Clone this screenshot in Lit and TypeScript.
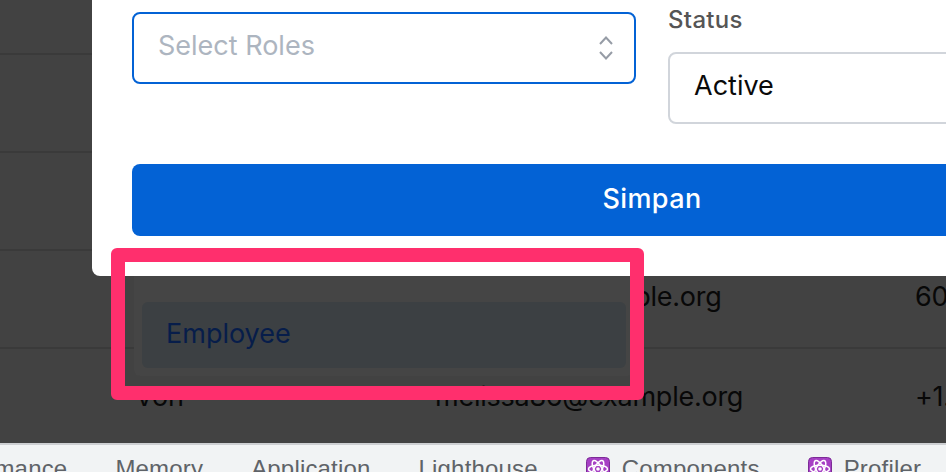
import { LitElement, html, css, svg } from "lit";
import { customElement } from "lit/decorators.js";

const atom = svg`<svg class="atom" viewBox="0 0 24 24" width="24" height="24">
  <rect x="0.5" y="0.5" width="23" height="23" rx="4" fill="#a640c4" stroke="#7c2b96"/>
  <g fill="none" stroke="#fff" stroke-width="1.5">
    <ellipse cx="12" cy="12" rx="9.5" ry="3.8"/>
    <ellipse cx="12" cy="12" rx="9.5" ry="3.8" transform="rotate(60 12 12)"/>
    <ellipse cx="12" cy="12" rx="9.5" ry="3.8" transform="rotate(120 12 12)"/>
  </g>
  <circle cx="12" cy="12" r="1.8" fill="#fff"/>
</svg>`;

@customElement("app-root")
export class AppRoot extends LitElement {
  static styles = css`
    :host {
      display: flex;
      flex-direction: column;
      width: 946px;
      height: 472px;
      overflow: hidden;
      font-family: "Inter", sans-serif;
    }
    .stage {
      position: relative;
      height: 443px;
      flex: none;
      background: #424242;
      overflow: hidden;
    }
    .table {
      display: grid;
      grid-template-rows: 55px 98px 98px 98px 94px;
    }
    .row {
      display: grid;
      grid-template-columns: 300px 480px 1fr;
      padding-left: 135px;
      align-items: center;
      border-bottom: 2px solid #3a3a3a;
      box-sizing: border-box;
      font-size: 27px;
      letter-spacing: -0.25px;
      color: #080808;
      white-space: nowrap;
      overflow: hidden;
    }
    .row:last-child { border-bottom: 0; }
    .row.r3 { padding-bottom: 6px; }
    .dropdown {
      position: absolute;
      left: 134px;
      top: 200px;
      width: 500px;
      height: 176px;
      box-sizing: border-box;
      padding: 8px;
      display: flex;
      flex-direction: column;
      justify-content: flex-end;
      background: #454545;
      border-radius: 6px;
    }
    .item {
      height: 66px;
      display: flex;
      align-items: center;
      padding: 0 0 4px 24px;
      box-sizing: border-box;
      border-radius: 6px;
      background: #3c4043;
      color: #071d4a;
      font-size: 27px;
    }
    .modal {
      position: absolute;
      left: 92px;
      top: -20px;
      width: 1120px;
      box-sizing: border-box;
      padding: 32px 40px 40px;
      background: #fff;
      border-radius: 8px;
      display: flex;
      flex-direction: column;
      gap: 40px;
    }
    .fields {
      display: flex;
      align-items: flex-start;
      gap: 32px;
    }
    .select {
      width: 504px;
      height: 72px;
      flex: none;
      box-sizing: border-box;
      border: 2px solid #0362d5;
      border-radius: 8px;
      padding: 0 20px 6px 24px;
      display: flex;
      align-items: center;
      justify-content: space-between;
      color: #adb5c0;
      font-size: 27px;
    }
    .chev { margin-top: 6px; }
    .label {
      height: 40px;
      color: #555;
      font-size: 24px;
      font-weight: 500;
      letter-spacing: 0.3px;
      line-height: 16px;
    }
    .input {
      width: 504px;
      height: 72px;
      box-sizing: border-box;
      border: 2px solid #d1d5db;
      border-radius: 8px;
      padding: 0 24px 6px;
      display: flex;
      align-items: center;
      color: #0a0a0a;
      font-size: 27px;
    }
    .save {
      height: 72px;
      background: #0362d5;
      color: #fff;
      font-size: 27px;
      font-weight: 500;
      letter-spacing: 0.4px;
      border-radius: 8px;
      display: flex;
      align-items: center;
      justify-content: center;
      padding-bottom: 4px;
      box-sizing: border-box;
    }
    .mark {
      position: absolute;
      left: 111px;
      top: 248px;
      width: 533px;
      height: 152px;
      box-sizing: border-box;
      border: 14px solid #ff2f6d;
      border-radius: 6px;
    }
    .tabs {
      flex: none;
      height: 29px;
      box-sizing: border-box;
      border-top: 2px solid #cdcfd2;
      background: #f1f3f4;
      display: flex;
      gap: 48px;
      margin-left: -72px;
      padding-top: 10px;
      font-family: "Liberation Sans", Arial, sans-serif;
      font-size: 24px;
      letter-spacing: 0.18px;
      line-height: 28px;
      color: #5f6368;
      white-space: nowrap;
      overflow: hidden;
    }
    .tab { display: flex; gap: 12px; }
    .atom { margin-top: 2px; flex: none; }
  `;

  render() {
    return html`
      <div class="stage">
        <div class="table">
          <div class="row"></div>
          <div class="row"></div>
          <div class="row"></div>
          <div class="row r3"><span></span><span>emilia86@example.org</span><span>60 812 3344</span></div>
          <div class="row r4"><span>Von</span><span>melissa86@example.org</span><span>+1.555.0142</span></div>
        </div>
        <div class="dropdown"><div class="item">Employee</div></div>
        <div class="modal">
          <div class="fields">
            <div class="select">
              <span>Select Roles</span>
              <svg class="chev" width="16" height="26" viewBox="0 0 16 26" fill="none" stroke="#969ca6" stroke-width="2">
                <path d="M2 9 8 2.5 14 9M2 17 8 23.5 14 17"/>
              </svg>
            </div>
            <div>
              <div class="label">Status</div>
              <div class="input">Active</div>
            </div>
          </div>
          <div class="save">Simpan</div>
        </div>
        <div class="mark"></div>
      </div>
      <div class="tabs">
        <span class="tab">Performance</span>
        <span class="tab">Memory</span>
        <span class="tab">Application</span>
        <span class="tab">Lighthouse</span>
        <span class="tab">${atom}Components</span>
        <span class="tab">${atom}Profiler</span>
      </div>
    `;
  }
}
